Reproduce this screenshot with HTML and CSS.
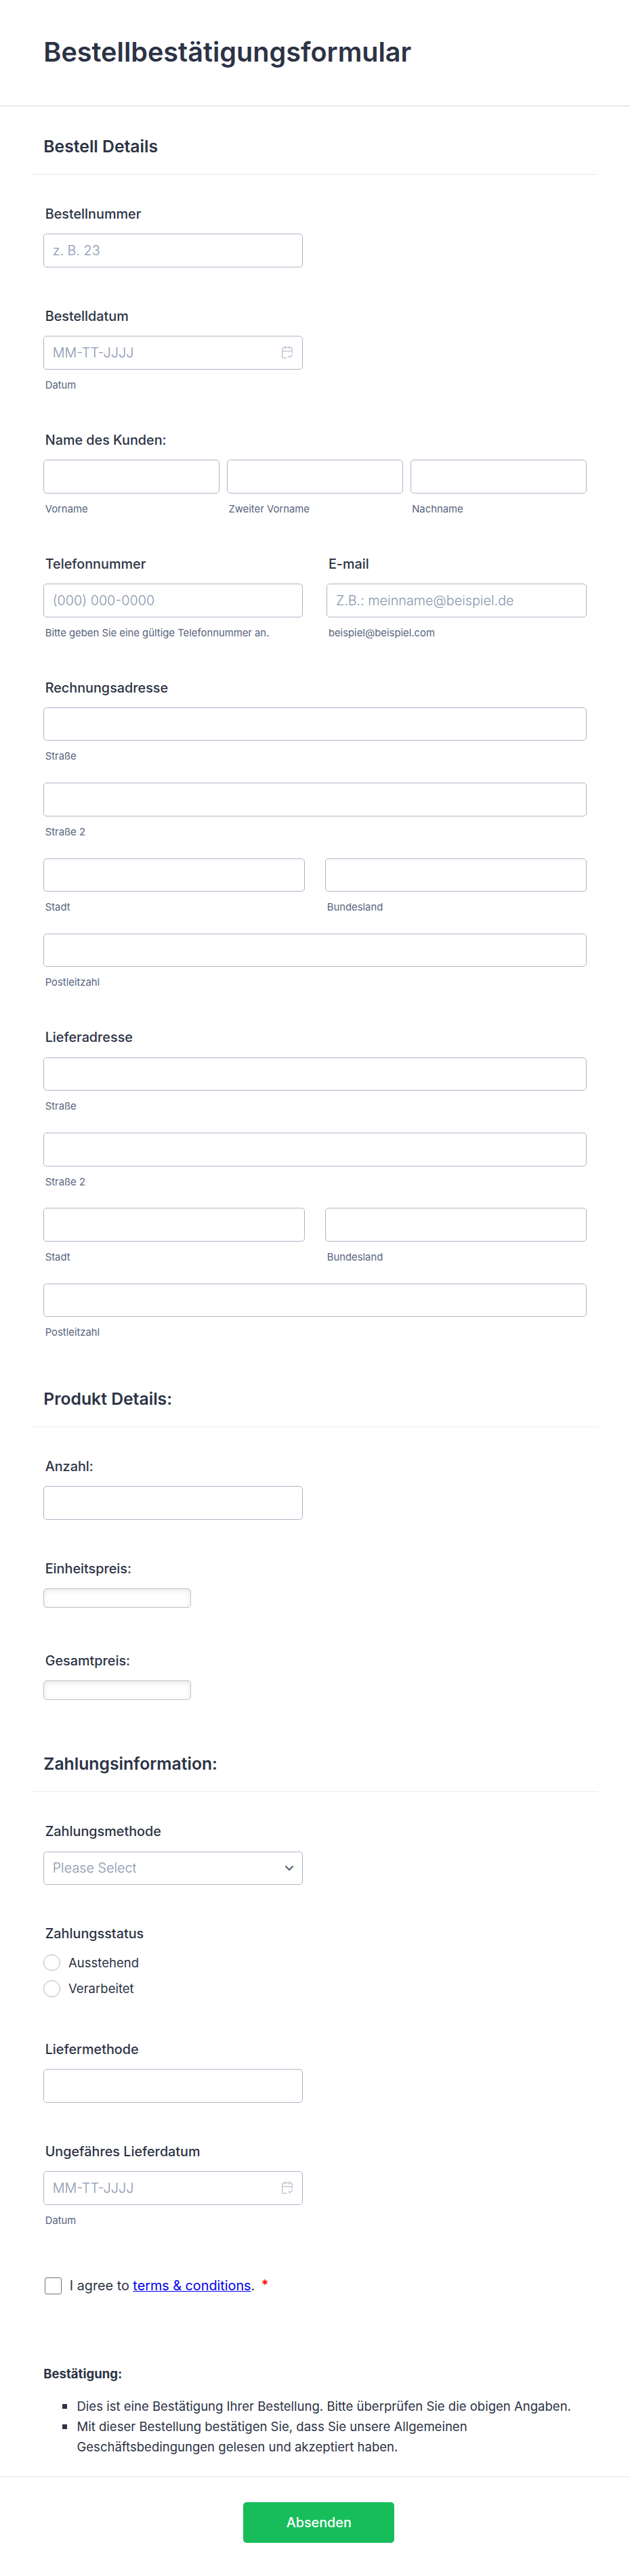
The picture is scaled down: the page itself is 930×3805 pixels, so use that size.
FILE: index.html
```html
<!DOCTYPE html>
<html lang="de">
<head>
  <meta charset="UTF-8">
  <meta name="viewport" content="width=device-width, initial-scale=1.0">
  <title>Bestellbestätigungsformular</title>
  <link rel="stylesheet" href="styles.css">
</head>
<body>
  <form class="form">
    <header class="form-header">
      <h1>Bestellbestätigungsformular</h1>
    </header>

    <h2 class="section-title first">Bestell Details</h2>

    <div class="field half">
      <label for="number">Bestellnummer</label>
      <input type="text" id="number" placeholder="z. B. 23">
    </div>

    <div class="field half">
      <label for="date">Bestelldatum</label>
      <div class="icon-input">
        <input type="text" id="date" placeholder="MM-TT-JJJJ">
        <svg class="calendar" viewBox="0 0 16 19" fill="none" stroke="currentColor" stroke-width="1.4" stroke-linecap="round">
          <path d="M7 17.6H2.6A1.9 1.9 0 0 1 .7 15.7V4.3A1.9 1.9 0 0 1 2.6 2.4H13.4A1.9 1.9 0 0 1 15.3 4.3V10.2M.7 7.6H15.3M4.8 .7V4.2M11.2 .7V4.2M9.8 15L11.7 17L15.3 13.2"/>
        </svg>
      </div>
      <span class="hint">Datum</span>
    </div>

    <div class="field">
      <label for="first">Name des Kunden:</label>
      <div class="names">
        <div>
          <input type="text" id="first">
          <span class="hint">Vorname</span>
        </div>
        <div>
          <input type="text" id="middle">
          <span class="hint">Zweiter Vorname</span>
        </div>
        <div>
          <input type="text" id="last">
          <span class="hint">Nachname</span>
        </div>
      </div>
    </div>

    <div class="contact">
      <div class="field half">
        <label for="phone">Telefonnummer</label>
        <input type="tel" id="phone" placeholder="(000) 000-0000">
        <span class="hint">Bitte geben Sie eine gültige Telefonnummer an.</span>
      </div>
      <div class="field half">
        <label for="email">E-mail</label>
        <input type="email" id="email" placeholder="Z.B.: meinname@beispiel.de">
        <span class="hint">beispiel@beispiel.com</span>
      </div>
    </div>

    <div class="field">
      <label for="bill-street">Rechnungsadresse</label>
      <div class="address">
        <div class="wide">
          <input type="text" id="bill-street">
          <span class="hint">Straße</span>
        </div>
        <div class="wide">
          <input type="text" id="bill-street2">
          <span class="hint">Straße 2</span>
        </div>
        <div>
          <input type="text" id="bill-city">
          <span class="hint">Stadt</span>
        </div>
        <div>
          <input type="text" id="bill-state">
          <span class="hint">Bundesland</span>
        </div>
        <div class="wide">
          <input type="text" id="bill-zip">
          <span class="hint">Postleitzahl</span>
        </div>
      </div>
    </div>

    <div class="field">
      <label for="ship-street">Lieferadresse</label>
      <div class="address">
        <div class="wide">
          <input type="text" id="ship-street">
          <span class="hint">Straße</span>
        </div>
        <div class="wide">
          <input type="text" id="ship-street2">
          <span class="hint">Straße 2</span>
        </div>
        <div>
          <input type="text" id="ship-city">
          <span class="hint">Stadt</span>
        </div>
        <div>
          <input type="text" id="ship-state">
          <span class="hint">Bundesland</span>
        </div>
        <div class="wide">
          <input type="text" id="ship-zip">
          <span class="hint">Postleitzahl</span>
        </div>
      </div>
    </div>

    <h2 class="section-title">Produkt Details:</h2>

    <div class="field half">
      <label for="amount">Anzahl:</label>
      <input type="text" id="amount">
    </div>

    <div class="field price">
      <label for="unit-price">Einheitspreis:</label>
      <input type="text" id="unit-price">
    </div>

    <div class="field price">
      <label for="total-price">Gesamtpreis:</label>
      <input type="text" id="total-price">
    </div>

    <h2 class="section-title">Zahlungsinformation:</h2>

    <div class="field half">
      <label for="payment">Zahlungsmethode</label>
      <div class="icon-input">
        <select id="payment">
          <option>Please Select</option>
        </select>
        <svg class="chevron" viewBox="0 0 14 9" fill="none" stroke="currentColor" stroke-width="2.3" stroke-linecap="round" stroke-linejoin="round">
          <path d="M2 2L7 7L12 2"/>
        </svg>
      </div>
    </div>

    <div class="field status">
      <label>Zahlungsstatus</label>
      <div class="radios">
        <label class="radio"><input type="radio" name="status"> Ausstehend</label>
        <label class="radio"><input type="radio" name="status"> Verarbeitet</label>
      </div>
    </div>

    <div class="field half">
      <label for="delivery">Liefermethode</label>
      <input type="text" id="delivery">
    </div>

    <div class="field half">
      <label for="delivery-date">Ungefähres Lieferdatum</label>
      <div class="icon-input">
        <input type="text" id="delivery-date" placeholder="MM-TT-JJJJ">
        <svg class="calendar" viewBox="0 0 16 19" fill="none" stroke="currentColor" stroke-width="1.4" stroke-linecap="round">
          <path d="M7 17.6H2.6A1.9 1.9 0 0 1 .7 15.7V4.3A1.9 1.9 0 0 1 2.6 2.4H13.4A1.9 1.9 0 0 1 15.3 4.3V10.2M.7 7.6H15.3M4.8 .7V4.2M11.2 .7V4.2M9.8 15L11.7 17L15.3 13.2"/>
        </svg>
      </div>
      <span class="hint">Datum</span>
    </div>

    <div class="terms">
      <input type="checkbox" id="terms">
      <span>I agree to <a href="#">terms &amp; conditions</a>.</span>
      <span class="required">*</span>
    </div>

    <div class="confirmation">
      <strong>Bestätigung:</strong>
      <ul>
        <li>Dies ist eine Bestätigung Ihrer Bestellung. Bitte überprüfen Sie die obigen Angaben.</li>
        <li>Mit dieser Bestellung bestätigen Sie, dass Sie unsere Allgemeinen Geschäftsbedingungen gelesen und akzeptiert haben.</li>
      </ul>
    </div>

    <footer class="form-footer">
      <button type="button">Absenden</button>
    </footer>
  </form>
</body>
</html>
```
FILE: styles.css
```css
* {
  box-sizing: border-box;
}
body {
  margin: 0;
  background: #fff;
  color: #2c3345;
  font-family: Inter, "Liberation Sans", sans-serif;
  font-size: 19.79px;
}
.form {
  width: 930px;
  min-height: 3805px;
}
.form-header {
  height: 157px;
  padding: 53px 64.3px 0;
  border-bottom: 1px solid #d0d4dc;
}
h1 {
  margin: 0;
  font-size: 39.6px;
  line-height: 48px;
  font-weight: 600;
}
.section-title {
  height: 70.6px;
  margin: 0 47px 46px;
  padding: 13.6px 17.3px 0;
  border-bottom: 1px solid #ebebee;
  font-size: 24.73px;
  line-height: 30px;
  font-weight: 600;
}
.section-title.first {
  height: 101px;
  padding-top: 44px;
}
.field {
  margin: 0 64.3px 60px;
}
.field.half {
  width: 383.2px;
}
.field > label {
  display: block;
  height: 24px;
  margin-bottom: 17.4px;
  padding-left: 2.4px;
  line-height: 24px;
  font-weight: 500;
}
input, select {
  display: block;
  width: 100%;
  height: 49.5px;
  margin: 0;
  padding: 0 12.4px;
  border: 1px solid #b0b5c6;
  border-radius: 5px;
  background: #fff;
  color: #2c3345;
  font-family: inherit;
  font-size: 19.79px;
  font-weight: 300;
  appearance: none;
}
input::placeholder {
  color: #8896ae;
  opacity: 1;
}
select {
  color: #8896ae;
}
.hint {
  display: block;
  height: 18px;
  margin-top: 14px;
  padding-left: 2.4px;
  color: #57647e;
  font-size: 14.84px;
  line-height: 18px;
}
.icon-input {
  position: relative;
}
.calendar {
  position: absolute;
  top: 15px;
  right: 15.5px;
  width: 16px;
  height: 19px;
  color: #bfc2d0;
}
.chevron {
  position: absolute;
  top: 20.5px;
  right: 13px;
  width: 14px;
  height: 9px;
  color: #57647e;
}
.names {
  display: grid;
  grid-template-columns: repeat(3, 1fr);
  column-gap: 10.8px;
}
.contact {
  display: flex;
  gap: 35px;
  padding: 0 64.3px;
}
.contact .field {
  margin-left: 0;
  margin-right: 0;
}
.address {
  display: grid;
  grid-template-columns: 1fr 1fr;
  gap: 29.8px 30.7px;
}
.address .wide {
  grid-column: span 2;
}
.price {
  margin-bottom: 65.3px;
}
.price input {
  width: 217.4px;
  height: 29.3px;
  border-color: #c0c3d0;
  box-shadow: inset 0 2px 8px rgba(0, 0, 0, 0.1);
}
.status {
  margin-bottom: 65px;
}
.status > label {
  margin-bottom: 18.6px;
}
.radios {
  display: grid;
  gap: 13.7px;
}
.radio {
  display: flex;
  align-items: center;
  gap: 12px;
  height: 24.7px;
  font-size: 18.55px;
}
.radio input {
  width: 24.7px;
  height: 24.7px;
  padding: 0;
  border-radius: 50%;
}
.terms {
  display: flex;
  align-items: center;
  height: 25px;
  margin: 75px 66.4px 0;
}
.terms input {
  width: 25px;
  height: 25px;
  margin-right: 11.4px;
  padding: 0;
  border-color: #767070;
  border-radius: 3px;
}
.terms a {
  color: #0000ee;
}
.required {
  height: 27px;
  margin-left: 9.5px;
  color: #ff0c00;
  font-weight: 600;
}
.confirmation {
  margin: 102.8px 64.3px 0;
  font-size: 18.55px;
  line-height: 30px;
}
.confirmation strong {
  display: block;
}
.confirmation ul {
  margin: 17.4px 0 0;
  padding-left: 49.2px;
  list-style: none;
}
.confirmation li::before {
  content: "";
  display: inline-block;
  width: 7px;
  height: 7px;
  margin: 0 14.5px 0 -21.5px;
  background: #2c3345;
  vertical-align: 3px;
}
.form-footer {
  display: flex;
  justify-content: center;
  margin-top: 29.6px;
  padding: 37px 0 0 11.5px;
  border-top: 1px solid #e3e5ee;
}
button {
  width: 222.6px;
  height: 59.4px;
  border: none;
  border-radius: 5px;
  background: #18bd5b;
  color: #fff;
  font-family: inherit;
  font-size: 19.79px;
  font-weight: 500;
}
```
